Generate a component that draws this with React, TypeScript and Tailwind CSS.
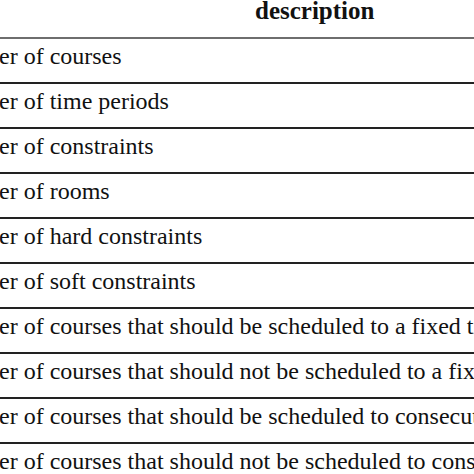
const rows = [
  'Number of courses',
  'Number of time periods',
  'Number of constraints',
  'Number of rooms',
  'Number of hard constraints',
  'Number of soft constraints',
  'Number of courses that should be scheduled to a fixed time period',
  'Number of courses that should not be scheduled to a fixed time period',
  'Number of courses that should be scheduled to consecutive time periods',
  'Number of courses that should not be scheduled to consecutive time periods',
];

export default function App() {
  return (
    <div
      className="w-[474px] h-[474px] overflow-hidden bg-white text-[#111]"
      style={{ fontFamily: '"Liberation Serif", "Times New Roman", serif' }}
    >
      <div className="h-[37px] flex justify-start">
        <div className="ml-[255px] text-[25px] font-bold leading-[22px] whitespace-nowrap">
          description
        </div>
      </div>
      <div className="border-t-2 border-[#6e6e6e]">
        {rows.map((r, i) => (
          <div
            key={i}
            className={
              i === 0
                ? 'h-[43px] whitespace-nowrap'
                : 'h-[45px] border-t-2 border-[#222] whitespace-nowrap'
            }
          >
            <div className="ml-[-61px] text-[24px] leading-[27px] pt-[4px]">{r}</div>
          </div>
        ))}
      </div>
    </div>
  );
}
